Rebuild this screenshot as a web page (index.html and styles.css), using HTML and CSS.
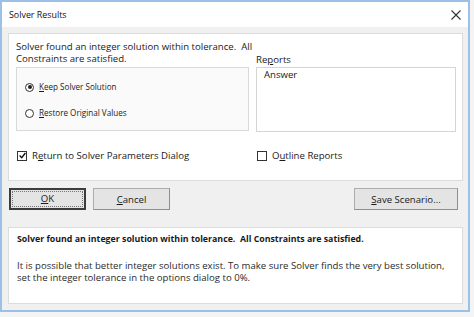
FILE: index.html
```html
<!DOCTYPE html>
<html>
<head>
  <meta charset="UTF-8">
  <title>Solver Results</title>
  <link rel="stylesheet" href="styles.css">
</head>
<body>
  <div class="window">
    <!-- title bar -->
    <div class="titlebar">
      <span class="title">Solver Results</span>
      <svg class="close" width="10" height="10" viewBox="0 0 10 10">
        <path d="M0.5 0.5 L9.5 9.5 M9.5 0.5 L0.5 9.5" stroke="#333" stroke-width="1.1" fill="none"/>
      </svg>
    </div>

    <div class="client">
      <!-- main panel -->
      <div class="panel">
        <div class="grid">
          <p class="msg">Solver found an integer solution within tolerance.&nbsp; All<br>Constraints are satisfied.</p>
          <div class="reports-label">Re<u>p</u>orts</div>

          <div class="options">
            <label class="opt"><span class="radio checked"></span><span><u>K</u>eep Solver Solution</span></label>
            <label class="opt"><span class="radio"></span><span><u>R</u>estore Original Values</span></label>
          </div>
          <div class="listbox">
            <div class="item">Answer</div>
          </div>

          <label class="check-row"><span class="check checked">
            <svg width="7" height="7" viewBox="0 0 7 7"><path d="M0.6 3.6 L2.7 5.7 L6.4 1" stroke="#111" stroke-width="1.4" fill="none"/></svg>
          </span><span>R<u>e</u>turn to Solver Parameters Dialog</span></label>
          <label class="check-row"><span class="check"></span><span>O<u>u</u>tline Reports</span></label>
        </div>
      </div>

      <!-- buttons -->
      <div class="buttons">
        <button class="btn default"><span class="focus"><u>O</u>K</span></button>
        <button class="btn"><u>C</u>ancel</button>
        <button class="btn wide"><u>S</u>ave Scenario...</button>
      </div>

      <!-- description -->
      <div class="info">
        <p class="info-head">Solver found an integer solution within tolerance.&nbsp; All Constraints are satisfied.</p>
        <p class="info-body">It is possible that better integer solutions exist. To make sure Solver finds the very best solution,<br>set the integer tolerance in the options dialog to 0%.</p>
      </div>
    </div>
  </div>
</body>
</html>
```

FILE: styles.css
```css
* {
  box-sizing: border-box;
  margin: 0;
  padding: 0;
}

body {
  background: #f4f4f4;
  font-family: "Open Sans", "Noto Sans", sans-serif;
  color: #1a1a1a;
}

.window {
  width: 470px;
  height: 312px;
  border: 2px solid #9dc0e6;
  background: #f0f0f0;
  display: flex;
  flex-direction: column;
}

.titlebar {
  height: 25px;
  background: #fff;
  display: flex;
  align-items: center;
  justify-content: space-between;
  padding: 0 7px 0 7px;
}

.title {
  font-size: 8.9px;
  color: #111;
}

.close {
  display: block;
}

.client {
  flex: 1;
  padding: 6px 5px 0 6px;
}

/* top white panel */
.panel {
  height: 148px;
  background: #fff;
  border: 1px solid #dcdcdc;
  padding: 7px 0 0 7px;
}

.grid {
  display: grid;
  grid-template-columns: 233px 200px;
  column-gap: 7px;
  font-size: 9.6px;
  line-height: 12px;
}

.msg {
  white-space: nowrap;
  height: 26px;
}

.reports-label {
  align-self: end;
  padding-bottom: 1px;
}

.options {
  height: 64px;
  border: 1px solid #d9d9d9;
  background: #fafafa;
  padding: 13px 0 0 8px;
  display: flex;
  flex-direction: column;
  gap: 14px;
  font-size: 8.1px;
}

.opt {
  display: flex;
  align-items: center;
  gap: 5px;
}

.radio {
  width: 9px;
  height: 9px;
  border: 1px solid #333;
  border-radius: 50%;
  background: #fff;
  display: flex;
  align-items: center;
  justify-content: center;
}

.radio.checked::after {
  content: "";
  width: 4px;
  height: 4px;
  border-radius: 50%;
  background: #222;
}

.listbox {
  height: 65px;
  border: 1px solid #d4d4d4;
  background: #fff;
  padding: 1px 7px;
}

.check-row {
  display: flex;
  align-items: center;
  gap: 5px;
  margin-top: 17px;
  padding-left: 1px;
}

.check-row:last-child {
  margin-top: 18px;
}

.check {
  width: 10px;
  height: 10px;
  border: 1px solid #333;
  background: #fff;
  display: flex;
  align-items: center;
  justify-content: center;
}

/* buttons */
.buttons {
  display: flex;
  gap: 7px;
  padding: 7px 5px 0 1px;
  height: 46px;
}

.btn {
  width: 77px;
  height: 22px;
  font-family: inherit;
  font-size: 9.6px;
  color: #1a1a1a;
  background: #e4e4e4;
  border: 1px solid #adadad;
  border-right-color: #8e8e8e;
  border-bottom-color: #8e8e8e;
}

.btn.default {
  border: 2px solid #3c3c3c;
  padding: 1px;
}

.focus {
  display: block;
  height: 100%;
  border: 1px dotted #777;
  line-height: 14px;
}

.btn.wide {
  width: 104px;
  margin-left: auto;
}

/* bottom info panel */
.info {
  height: 77px;
  background: #fff;
  border: 1px solid #dcdcdc;
  padding: 5px 8px 0 8px;
  font-size: 9.6px;
  line-height: 12px;
}

.info-head {
  font-weight: bold;
  font-size: 8.8px;
  margin-bottom: 15px;
}

.info-body {
  white-space: nowrap;
  color: #2a2a2a;
}
```
